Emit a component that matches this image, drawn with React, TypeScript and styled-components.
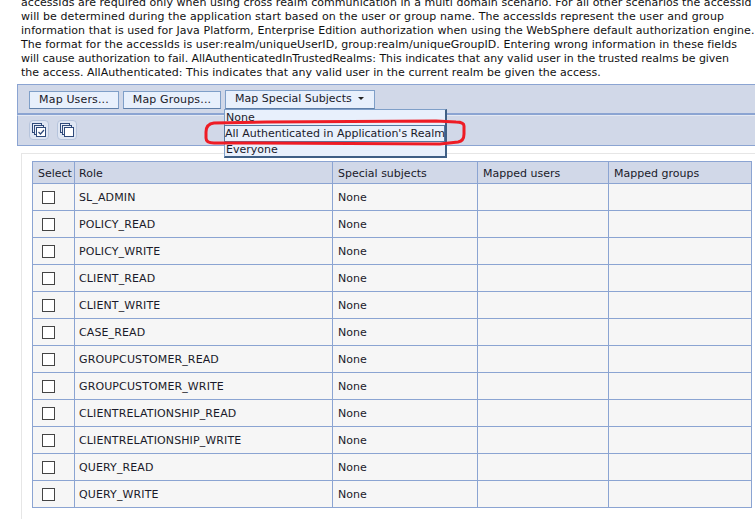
import React from "react";
import styled, { createGlobalStyle } from "styled-components";

const GlobalStyle = createGlobalStyle`
  html, body {
    margin: 0;
    padding: 0;
    background: #fff;
    overflow: hidden;
  }
  body {
    font-family: "DejaVu Sans", Verdana, sans-serif;
    font-size: 11px;
    color: #1a1a1a;
  }
`;

const Page = styled.div`
  position: relative;
  width: 755px;
  height: 519px;
  overflow: hidden;
`;

const Intro = styled.div`
  margin-top: -4px;
  padding-left: 21px;
  width: 760px;
  height: 88px;
  box-sizing: border-box;
  font-size: 11px;
  line-height: 14px;
  color: #111;
`;

const IntroLine = styled.div<{ $spacing: number }>`
  white-space: pre;
  letter-spacing: ${(p) => p.$spacing}px;
`;

const Bar = styled.div<{ $height: number }>`
  box-sizing: border-box;
  margin-left: 17px;
  height: ${(p) => p.$height}px;
  background: #d1d8e8;
  border: 1px solid #8ba4d2;
  border-right: none;
  display: flex;
  align-items: flex-start;
`;

const ButtonBar = styled(Bar)`
  border-bottom: 2px solid #8ba4d2;
  padding: 5px 0 0 11px;
  gap: 4px;
`;

const IconBar = styled(Bar)`
  border-top-color: #e4e9f3;
  padding: 4px 0 0 11px;
  gap: 8px;
`;

const Button = styled.button<{ $width: number }>`
  box-sizing: border-box;
  width: ${(p) => p.$width}px;
  height: 18px;
  margin-top: 1px;
  padding: 0 0 2px;
  background: #e8f0fc;
  border: 1px solid #7f9fc8;
  border-bottom-color: #5f7fa8;
  font: inherit;
  font-size: 11px;
  letter-spacing: 0.15px;
  color: #1a1a2a;
  white-space: nowrap;
  cursor: pointer;
`;

const MenuButton = styled(Button)`
  margin-top: 0;
  height: 19px;
  padding-left: 9px;
  letter-spacing: 0;
  display: flex;
  align-items: center;
  gap: 6px;
`;

const Caret = styled.span`
  width: 0;
  height: 0;
  border-left: 3px solid transparent;
  border-right: 3px solid transparent;
  border-top: 3px solid #222;
`;

const IconButton = styled.button`
  box-sizing: border-box;
  width: 20px;
  height: 20px;
  padding: 0;
  display: flex;
  align-items: center;
  justify-content: center;
  background: #dfe6f3;
  border: 1px solid #b6c4dc;
  border-radius: 4px;
`;

const Menu = styled.ul`
  position: absolute;
  left: 224px;
  top: 109px;
  box-sizing: border-box;
  width: 223px;
  height: 49px;
  margin: 0;
  padding: 0;
  list-style: none;
  background: #e8f0fc;
  border: 1px solid #7f9fc8;
  border-right: 2px solid #3f5f85;
  border-bottom: 2px solid #3f5f85;
  font-size: 11px;
`;

const MenuItem = styled.li<{ $active?: boolean }>`
  box-sizing: border-box;
  height: ${(p) => (p.$active ? 17 : 15)}px;
  line-height: 15px;
  white-space: nowrap;
  color: #1a1a2a;
  border: ${(p) => (p.$active ? "1px solid #55779f" : "none")};
  margin-left: ${(p) => (p.$active ? -1 : 0)}px;
  padding-left: ${(p) => (p.$active ? 0 : 1)}px;
`;

const Highlight = styled.svg`
  position: absolute;
  left: 200px;
  top: 118px;
  pointer-events: none;
`;

const Panel = styled.div`
  margin: 7px 0 0 21px;
  padding: 7px 0 0 10px;
  border-top: 1px solid #e6e6e6;
  border-left: 1px solid #e6e6e6;
  height: 360px;
`;

const Table = styled.table`
  border-collapse: collapse;
  table-layout: fixed;
  width: 720px;
  font-size: 11px;
`;

const Head = styled.th<{ $tight?: boolean }>`
  height: 22px;
  padding: 2px 0 0 ${(p) => (p.$tight ? 4 : 5)}px;
  box-sizing: border-box;
  background: #d1d8e8;
  border: 1px solid #8ba4d2;
  font-weight: normal;
  text-align: left;
  color: #1a1a2a;
  white-space: nowrap;
`;

const Cell = styled.td`
  height: 27px;
  padding: 0 0 0 5px;
  box-sizing: border-box;
  background: #f6f6f6;
  border: 1px solid #8ba4d2;
  color: #1a1a2a;
  white-space: nowrap;
`;

const RoleCell = styled(Cell)`
  padding-left: 4px;
  letter-spacing: 0.12px;
`;

const CheckCell = styled(Cell)`
  padding: 0 0 0 9px;
`;

const Check = styled.span`
  display: block;
  box-sizing: border-box;
  width: 13px;
  height: 13px;
  background: #fff;
  border: 1px solid #444;
`;

const introLines = [
  { text: "accessIds are required only when using cross realm communication in a multi domain scenario. For all other scenarios the accessId", spacing: 0.05 },
  { text: "will be determined during the application start based on the user or group name. The accessIds represent the user and group", spacing: 0.08 },
  { text: "information that is used for Java Platform, Enterprise Edition authorization when using the WebSphere default authorization engine.", spacing: 0.06 },
  { text: "The format for the accessIds is user:realm/uniqueUserID, group:realm/uniqueGroupID. Entering wrong information in these fields", spacing: 0.05 },
  { text: "will cause authorization to fail. AllAuthenticatedInTrustedRealms: This indicates that any valid user in the trusted realms be given", spacing: -0.045 },
  { text: "the access. AllAuthenticated: This indicates that any valid user in the current realm be given the access.", spacing: 0.03 },
];

const roles = [
  "SL_ADMIN",
  "POLICY_READ",
  "POLICY_WRITE",
  "CLIENT_READ",
  "CLIENT_WRITE",
  "CASE_READ",
  "GROUPCUSTOMER_READ",
  "GROUPCUSTOMER_WRITE",
  "CLIENTRELATIONSHIP_READ",
  "CLIENTRELATIONSHIP_WRITE",
  "QUERY_READ",
  "QUERY_WRITE",
];

function SelectAllIcon() {
  return (
    <svg width="16" height="16" viewBox="0 0 16 16" fill="none" stroke="#2f4a7a">
      <rect x="1.5" y="1.5" width="9" height="9" fill="#e8eef8" />
      <rect x="3.5" y="3.5" width="9" height="9" fill="#e8eef8" />
      <rect x="5.5" y="5.5" width="9" height="9" fill="#fff" />
      <path d="M7.5 10l2 2 3.5-4" strokeWidth="1.2" />
    </svg>
  );
}

function DeselectAllIcon() {
  return (
    <svg width="16" height="16" viewBox="0 0 16 16" fill="none" stroke="#2f4a7a">
      <rect x="1.5" y="1.5" width="9" height="9" fill="#e8eef8" />
      <rect x="3.5" y="3.5" width="9" height="9" fill="#e8eef8" />
      <rect x="5.5" y="5.5" width="9" height="9" fill="#fff" />
    </svg>
  );
}

function App() {
  return (
    <Page>
      <GlobalStyle />
      <Intro>
        {introLines.map((line) => (
          <IntroLine key={line.text} $spacing={line.spacing}>
            {line.text}
          </IntroLine>
        ))}
      </Intro>
      <ButtonBar $height={31}>
        <Button $width={90}>Map Users...</Button>
        <Button $width={98}>Map Groups...</Button>
        <MenuButton $width={150}>
          Map Special Subjects <Caret />
        </MenuButton>
      </ButtonBar>
      <IconBar $height={31}>
        <IconButton>
          <SelectAllIcon />
        </IconButton>
        <IconButton>
          <DeselectAllIcon />
        </IconButton>
      </IconBar>
      <Panel>
        <Table>
          <colgroup>
            <col width="42" />
            <col width="258" />
            <col width="145" />
            <col width="131" />
            <col width="143" />
          </colgroup>
          <thead>
            <tr>
              <Head>Select</Head>
              <Head $tight>Role</Head>
              <Head>Special subjects</Head>
              <Head>Mapped users</Head>
              <Head>Mapped groups</Head>
            </tr>
          </thead>
          <tbody>
            {roles.map((role) => (
              <tr key={role}>
                <CheckCell>
                  <Check />
                </CheckCell>
                <RoleCell>{role}</RoleCell>
                <Cell>None</Cell>
                <Cell />
                <Cell />
              </tr>
            ))}
          </tbody>
        </Table>
      </Panel>
      <Menu>
        <MenuItem>None</MenuItem>
        <MenuItem $active>All Authenticated in Application's Realm</MenuItem>
        <MenuItem>Everyone</MenuItem>
      </Menu>
      <Highlight width="270" height="30" viewBox="0 0 270 30" fill="none">
        <path
          d="M66 4 L14 5 Q6 6 6 14 L6 20 Q6 25 14 25 L58 25 L240 26 L258 24 Q264 23 264 16 L264 8 Q264 4 256 4 L236 3 L66 4"
          stroke="#ee1c25"
          strokeWidth="3"
        />
      </Highlight>
    </Page>
  );
}

export default App;
